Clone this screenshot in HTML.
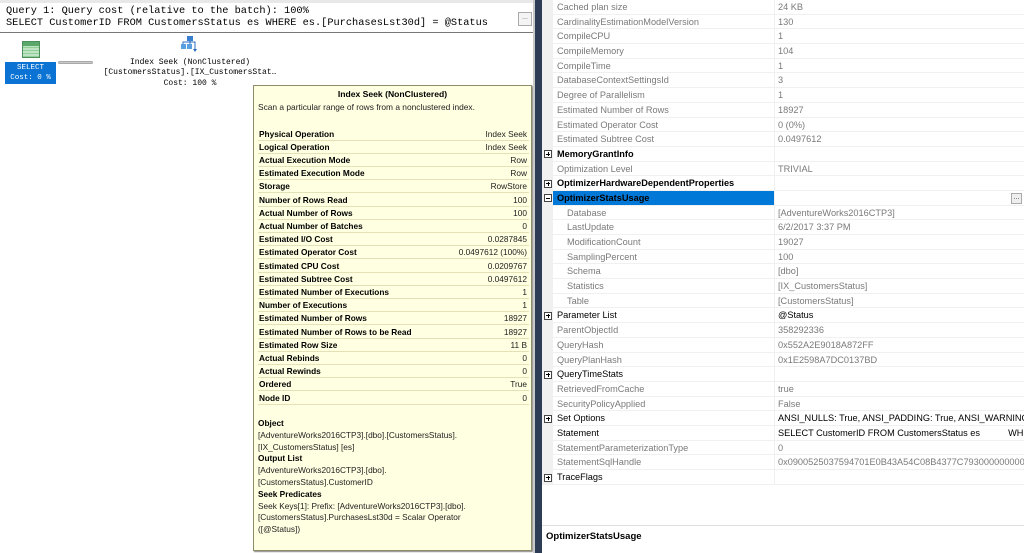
<!DOCTYPE html>
<html><head><meta charset="utf-8"><style>
*{margin:0;padding:0;box-sizing:border-box}
body{width:1024px;height:553px;overflow:hidden;background:#fff;position:relative;font-family:"Liberation Sans",sans-serif}
.abs{position:absolute}
.mono{font-family:"Liberation Mono",monospace;font-size:10.3px;white-space:nowrap}
#div{left:533px;top:0;width:9px;height:553px;background:#2d3b57;border-left:2px solid #c8c8c8}
#right{left:542px;top:0;width:482px;height:553px;background:#fff}
.row{position:absolute;left:0;width:482px;height:14.7px;font-size:9.2px;line-height:14.7px;white-space:nowrap;overflow:hidden}
.row .g{position:absolute;left:0;top:0;width:11px;height:100%;background:#f0f0f0}
.row .n{position:absolute;left:11px;top:0;width:222px;height:100%;padding-left:4px;color:#7a7a7a;border-bottom:1px solid #f0f0f0;border-right:1px solid #f0f0f0}
.row .v{position:absolute;left:233px;top:0;width:249px;height:100%;padding-left:3px;color:#7a7a7a;border-bottom:1px solid #f0f0f0}
.row.c .n{color:#000;font-weight:bold}
.row.k .n,.row.k .v{color:#000}
.row.ch .n{padding-left:14px}
.pl{position:absolute;left:2px;top:3.5px;width:8px;height:8px;border:1px solid #444;font-size:8px;line-height:6px;text-align:center;color:#000;background:#fff}
.pl:before{content:"";position:absolute;left:1px;top:2.5px;width:4px;height:1px;background:#000}
.pl.p:after{content:"";position:absolute;left:2.5px;top:1px;width:1px;height:4px;background:#000}
.sel .n{background:#0078d7;color:#fff;font-weight:normal}
#tip{left:253px;top:85px;width:279px;height:466px;background:#ffffe1;border:1px solid #8d8d6a;box-shadow:1px 1px 1px #888}
.tr{position:absolute;left:4px;width:271px;height:13.2px;font-size:8.3px;line-height:13px;border-bottom:1px solid #e3e1b5;white-space:nowrap}
.tr b{position:absolute;left:1px}
.tr span{position:absolute;right:2px;color:#222}
.tb{position:absolute;left:4px;font-size:8.3px;line-height:12px;color:#222;white-space:nowrap}
</style></head><body>
<div class="abs" style="left:0;top:0;width:533px;height:3px;background:#e8e8e8"></div>
<div class="abs mono" style="left:6px;top:5px">Query 1: Query cost (relative to the batch): 100%</div>
<div class="abs mono" style="left:6px;top:17px">SELECT CustomerID FROM CustomersStatus es WHERE es.[PurchasesLst30d] = @Status</div>
<div class="abs" style="left:518px;top:12px;width:14px;height:14px;border:1px solid #aaa;background:#f4f4f4;font-size:7px;text-align:center;line-height:10px;color:#666">...</div>
<div class="abs" style="left:0;top:32px;width:533px;height:1px;background:#777"></div>
<!-- select icon -->
<div class="abs" style="left:22px;top:41px;width:18px;height:17px;background:linear-gradient(#5aa86a,#5aa86a) 0 0/100% 4px no-repeat,repeating-linear-gradient(#bfe3c3 0 2px,#8fcf98 2px 3px);border:1px solid #4d8f5a"></div>
<div class="abs mono" style="left:5px;top:62px;width:51px;height:22px;background:#0a73d4;color:#fff;font-size:7.5px;text-align:center;line-height:10px;padding-top:1px">SELECT<br>Cost: 0 %</div>
<div class="abs" style="left:58px;top:61px;width:35px;height:3px;background:#c8c8c8;border-radius:2px;border:1px solid #aaa"></div>
<svg class="abs" style="left:180px;top:36px" width="20" height="18" viewBox="0 0 20 18"><rect x="7" y="0" width="6" height="5" fill="#3a7fd0"/><rect x="1" y="8" width="5" height="5" fill="#5aa0e0"/><rect x="7" y="8" width="5" height="5" fill="#5aa0e0"/><path d="M10 5V8M3 8V6H15V14" stroke="#2a6cc0" fill="none"/><path d="M13 13L15 16L17 13Z" fill="#2a6cc0"/></svg>
<div class="abs mono" style="left:90px;top:58px;width:200px;text-align:center;font-size:8px;line-height:9.5px">Index Seek (NonClustered)<br>[CustomersStatus].[IX_CustomersStat…</div>
<div class="abs mono" style="left:90px;top:79px;width:200px;text-align:center;font-size:8px">Cost: 100 %</div>

<div id="tip" class="abs">
<div class="abs" style="left:0;top:3px;width:277px;text-align:center;font-size:8.6px;font-weight:bold">Index Seek (NonClustered)</div>
<div class="tb" style="top:15px;font-size:8.4px">Scan a particular range of rows from a nonclustered index.</div>
<div class="tr" style="top:41.5px"><b>Physical Operation</b><span>Index Seek</span></div>
<div class="tr" style="top:54.7px"><b>Logical Operation</b><span>Index Seek</span></div>
<div class="tr" style="top:67.9px"><b>Actual Execution Mode</b><span>Row</span></div>
<div class="tr" style="top:81.1px"><b>Estimated Execution Mode</b><span>Row</span></div>
<div class="tr" style="top:94.3px"><b>Storage</b><span>RowStore</span></div>
<div class="tr" style="top:107.5px"><b>Number of Rows Read</b><span>100</span></div>
<div class="tr" style="top:120.7px"><b>Actual Number of Rows</b><span>100</span></div>
<div class="tr" style="top:133.9px"><b>Actual Number of Batches</b><span>0</span></div>
<div class="tr" style="top:147.1px"><b>Estimated I/O Cost</b><span>0.0287845</span></div>
<div class="tr" style="top:160.3px"><b>Estimated Operator Cost</b><span>0.0497612 (100%)</span></div>
<div class="tr" style="top:173.5px"><b>Estimated CPU Cost</b><span>0.0209767</span></div>
<div class="tr" style="top:186.7px"><b>Estimated Subtree Cost</b><span>0.0497612</span></div>
<div class="tr" style="top:199.9px"><b>Estimated Number of Executions</b><span>1</span></div>
<div class="tr" style="top:213.1px"><b>Number of Executions</b><span>1</span></div>
<div class="tr" style="top:226.3px"><b>Estimated Number of Rows</b><span>18927</span></div>
<div class="tr" style="top:239.5px"><b>Estimated Number of Rows to be Read</b><span>18927</span></div>
<div class="tr" style="top:252.7px"><b>Estimated Row Size</b><span>11 B</span></div>
<div class="tr" style="top:265.9px"><b>Actual Rebinds</b><span>0</span></div>
<div class="tr" style="top:279.1px"><b>Actual Rewinds</b><span>0</span></div>
<div class="tr" style="top:292.3px"><b>Ordered</b><span>True</span></div>
<div class="tr" style="top:305.5px"><b>Node ID</b><span>0</span></div>
<div class="tb" style="top:332px;line-height:11.8px"><b style="color:#000">Object</b><br>[AdventureWorks2016CTP3].[dbo].[CustomersStatus].<br>[IX_CustomersStatus] [es]<br><b style="color:#000">Output List</b><br>[AdventureWorks2016CTP3].[dbo].<br>[CustomersStatus].CustomerID<br><b style="color:#000">Seek Predicates</b><br>Seek Keys[1]: Prefix: [AdventureWorks2016CTP3].[dbo].<br>[CustomersStatus].PurchasesLst30d = Scalar Operator<br>([@Status])</div>
</div>

<div id="div" class="abs"></div>
<div id="right" class="abs">
<div class="row" style="top:0px"><div class="g"></div><div class="n">Cached plan size</div><div class="v">24 KB</div></div>
<div class="row" style="top:14.69px"><div class="g"></div><div class="n">CardinalityEstimationModelVersion</div><div class="v">130</div></div>
<div class="row" style="top:29.38px"><div class="g"></div><div class="n">CompileCPU</div><div class="v">1</div></div>
<div class="row" style="top:44.07px"><div class="g"></div><div class="n">CompileMemory</div><div class="v">104</div></div>
<div class="row" style="top:58.76px"><div class="g"></div><div class="n">CompileTime</div><div class="v">1</div></div>
<div class="row" style="top:73.45px"><div class="g"></div><div class="n">DatabaseContextSettingsId</div><div class="v">3</div></div>
<div class="row" style="top:88.14px"><div class="g"></div><div class="n">Degree of Parallelism</div><div class="v">1</div></div>
<div class="row" style="top:102.83px"><div class="g"></div><div class="n">Estimated Number of Rows</div><div class="v">18927</div></div>
<div class="row" style="top:117.52px"><div class="g"></div><div class="n">Estimated Operator Cost</div><div class="v">0 (0%)</div></div>
<div class="row" style="top:132.21px"><div class="g"></div><div class="n">Estimated Subtree Cost</div><div class="v">0.0497612</div></div>
<div class="row c" style="top:146.9px"><div class="g"><div class="pl p"></div></div><div class="n">MemoryGrantInfo</div><div class="v"></div></div>
<div class="row" style="top:161.59px"><div class="g"></div><div class="n">Optimization Level</div><div class="v">TRIVIAL</div></div>
<div class="row c" style="top:176.28px"><div class="g"><div class="pl p"></div></div><div class="n">OptimizerHardwareDependentProperties</div><div class="v"></div></div>
<div class="row c sel" style="top:190.97px"><div class="g"><div class="pl"></div></div><div class="n">OptimizerStatsUsage</div><div class="v"><div style="position:absolute;right:2px;top:2px;width:11px;height:11px;border:1px solid #aaa;background:#eee;font-size:7px;line-height:8px;text-align:center;color:#333">...</div></div></div>
<div class="row ch" style="top:205.66px"><div class="g"></div><div class="n">Database</div><div class="v">[AdventureWorks2016CTP3]</div></div>
<div class="row ch" style="top:220.35px"><div class="g"></div><div class="n">LastUpdate</div><div class="v">6/2/2017 3:37 PM</div></div>
<div class="row ch" style="top:235.04px"><div class="g"></div><div class="n">ModificationCount</div><div class="v">19027</div></div>
<div class="row ch" style="top:249.73px"><div class="g"></div><div class="n">SamplingPercent</div><div class="v">100</div></div>
<div class="row ch" style="top:264.42px"><div class="g"></div><div class="n">Schema</div><div class="v">[dbo]</div></div>
<div class="row ch" style="top:279.11px"><div class="g"></div><div class="n">Statistics</div><div class="v">[IX_CustomersStatus]</div></div>
<div class="row ch" style="top:293.8px"><div class="g"></div><div class="n">Table</div><div class="v">[CustomersStatus]</div></div>
<div class="row k" style="top:308.49px"><div class="g"><div class="pl p"></div></div><div class="n">Parameter List</div><div class="v">@Status</div></div>
<div class="row" style="top:323.18px"><div class="g"></div><div class="n">ParentObjectId</div><div class="v">358292336</div></div>
<div class="row" style="top:337.87px"><div class="g"></div><div class="n">QueryHash</div><div class="v">0x552A2E9018A872FF</div></div>
<div class="row" style="top:352.56px"><div class="g"></div><div class="n">QueryPlanHash</div><div class="v">0x1E2598A7DC0137BD</div></div>
<div class="row k" style="top:367.25px"><div class="g"><div class="pl p"></div></div><div class="n">QueryTimeStats</div><div class="v"></div></div>
<div class="row" style="top:381.94px"><div class="g"></div><div class="n">RetrievedFromCache</div><div class="v">true</div></div>
<div class="row" style="top:396.63px"><div class="g"></div><div class="n">SecurityPolicyApplied</div><div class="v">False</div></div>
<div class="row k" style="top:411.32px"><div class="g"><div class="pl p"></div></div><div class="n">Set Options</div><div class="v">ANSI_NULLS: True, ANSI_PADDING: True, ANSI_WARNINGS: True</div></div>
<div class="row k" style="top:426.01px"><div class="g"></div><div class="n">Statement</div><div class="v">SELECT CustomerID FROM CustomersStatus es &nbsp;&nbsp;&nbsp;&nbsp;&nbsp;&nbsp;&nbsp;&nbsp;&nbsp;&nbsp;WHERE</div></div>
<div class="row" style="top:440.7px"><div class="g"></div><div class="n">StatementParameterizationType</div><div class="v">0</div></div>
<div class="row" style="top:455.39px"><div class="g"></div><div class="n">StatementSqlHandle</div><div class="v">0x0900525037594701E0B43A54C08B4377C79300000000000000</div></div>
<div class="row k" style="top:470.08px"><div class="g"><div class="pl p"></div></div><div class="n">TraceFlags</div><div class="v"></div></div>
<div class="abs" style="left:0;top:485px;width:482px;height:40px;background:#fff"></div>
<div class="abs" style="left:0;top:525px;width:482px;height:1px;background:#e0e0e0"></div>
<div class="abs" style="left:4px;top:531px;font-size:9.5px;font-weight:bold">OptimizerStatsUsage</div>
</div>
</body></html>
